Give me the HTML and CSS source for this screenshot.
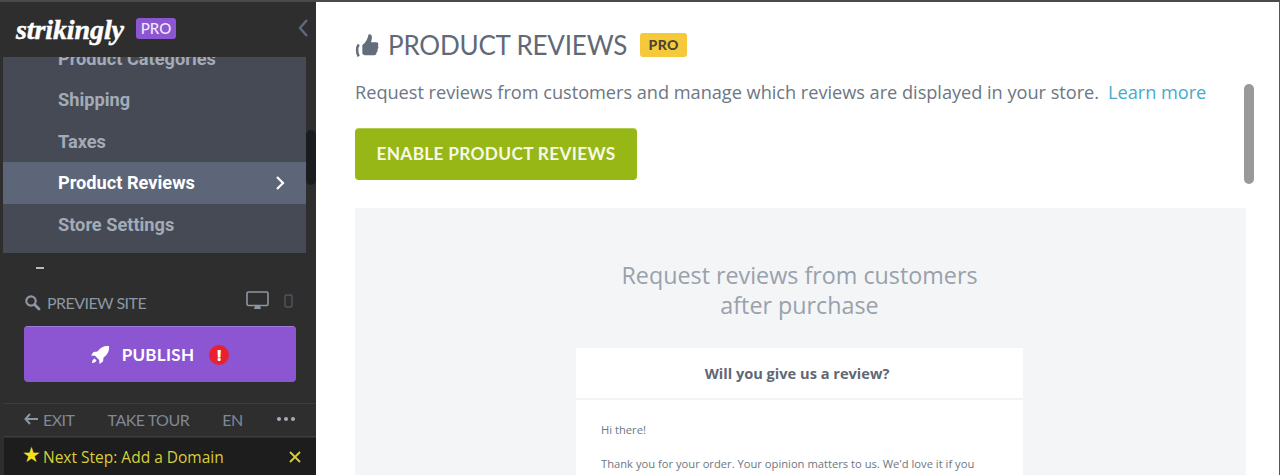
FILE: index.html
```html
<!DOCTYPE html>
<html lang="en">
<head>
<meta charset="utf-8">
<title>Product Reviews</title>
<link rel="stylesheet" href="styles.css">
</head>
<body>
<div class="app">
  <aside class="sidebar">
    <header class="brand">
      <span class="logo">strikingly</span>
      <span class="pro-purple">PRO</span>
      <svg class="collapse" width="12" height="20" viewBox="0 0 12 20"><path d="M10 2 3 10l7 8" fill="none" stroke="#5d6a7c" stroke-width="2.4"/></svg>
    </header>
    <div class="scroll-area">
      <nav class="menu">
        <a class="item">Product Categories</a>
        <a class="item">Shipping</a>
        <a class="item">Taxes</a>
        <a class="item active">Product Reviews
          <svg width="12" height="16" viewBox="0 0 12 16"><path d="M3 2l6 6-6 6" fill="none" stroke="#fff" stroke-width="2.2"/></svg>
        </a>
        <a class="item">Store Settings</a>
      </nav>
      <div class="next-section"></div>
      <div class="side-thumb"></div>
    </div>
    <div class="preview">
      <span class="preview-link">
        <svg width="17" height="17" viewBox="0 0 17 17"><circle cx="7" cy="7" r="4.7" fill="none" stroke="#8d96a3" stroke-width="2.2"/><path d="M10.5 10.5 15 15" stroke="#8d96a3" stroke-width="2.8" stroke-linecap="round"/></svg>
        PREVIEW SITE
      </span>
      <span class="devices">
        <svg width="23" height="20" viewBox="0 0 23 20"><rect x="1" y="1" width="21" height="13.5" rx="1.5" fill="none" stroke="#8d96a3" stroke-width="1.6"/><path d="M9 15h5l1 3H8z" fill="#8d96a3"/></svg>
        <svg width="9" height="14" viewBox="0 0 9 14"><rect x="1" y="1" width="7" height="12" rx="1.4" fill="none" stroke="#4f5663" stroke-width="1.4"/></svg>
      </span>
    </div>
    <button class="publish">
      <svg width="20" height="20" viewBox="0 0 20 20"><path d="M19 1c-5-.5-9 1.500-11.500 5.500L3.500 7 1 10.500l4 .3 4.200 4.200.3 4 3.500-2.500.5-4C17.500 10 19.500 6 19 1z" fill="#fff"/><path d="M4.500 13.500C3 14 2 16 2 18c2 0 4-1 4.500-2.500z" fill="#fff"/></svg>
      PUBLISH
      <span class="alert">!</span>
    </button>
    <div class="tools">
      <span class="exit">
        <svg width="14" height="12" viewBox="0 0 14 12"><path d="M6 1 1.500 6 6 11M2 6h12" fill="none" stroke="#8d96a3" stroke-width="2"/></svg>
        EXIT
      </span>
      <span>TAKE TOUR</span>
      <span>EN</span>
      <span class="dots"><i></i><i></i><i></i></span>
    </div>
    <div class="next-step">
      <span class="star">★</span>
      <span class="next-text">Next Step: Add a Domain</span>
      <svg class="close" width="12" height="12" viewBox="0 0 12 12"><path d="M1 1l10 10M11 1 1 11" stroke="#d8cf3a" stroke-width="1.800"/></svg>
    </div>
  </aside>
  <main class="main">
    <div class="title-row">
      <svg class="thumb" width="24" height="26" viewBox="0 0 23 25"><path d="M7 11.500c3-2 5-5 6-10 2-.8 3.500 1 3.200 3.500l-.8 4h5c2 0 2.500 2 1.600 3.200.8 1.200.6 2.600-.4 3.400.4 1.300 0 2.500-1 3.200.2 1.500-.8 2.700-2.300 2.700H11c-1.700 0-3-.6-4-1.500z" fill="#646d7b"/><path d="M3.500 11C1.500 14 1.500 19 3.500 22.500" fill="none" stroke="#646d7b" stroke-width="2.400"/></svg>
      <h1>PRODUCT REVIEWS</h1>
      <span class="pro-yellow">PRO</span>
    </div>
    <p class="lead">Request reviews from customers and manage which reviews are displayed in your store.<a class="learn">Learn more</a></p>
    <button class="enable">ENABLE PRODUCT REVIEWS</button>
    <section class="promo">
      <h2>Request reviews from customers<br>after purchase</h2>
      <div class="email">
        <div class="email-head">Will you give us a review?</div>
        <div class="email-body">
          <p>Hi there!</p>
          <p>Thank you for your order. Your opinion matters to us. We'd love it if you could leave a review of your purchase.</p>
        </div>
      </div>
    </section>
    <div class="main-thumb"></div>
  </main>
</div>
</body>
</html>
```
FILE: styles.css
```css
* { box-sizing: border-box; }
html, body { margin: 0; height: 100%; overflow: hidden; }
body { background: #fff; font-family: "Open Sans", sans-serif; }
.app {
  display: flex;
  width: 1280px;
  height: 475px;
  border-top: 2px solid #4a4a4a;
  border-right: 1px solid #555;
  overflow: hidden;
}
.sidebar {
  width: 316px;
  flex: none;
  display: flex;
  flex-direction: column;
  background: #2e2e2e;
  padding-left: 3px;
  position: relative;
}
.brand {
  height: 55px;
  flex: none;
  display: flex;
  align-items: center;
  padding-left: 13px;
  position: relative;
}
.logo {
  font-family: "Liberation Serif", serif;
  font-style: italic;
  font-weight: 700;
  font-size: 28px;
  color: #fff;
  width: 120px;
  letter-spacing: -.1px;
  -webkit-text-stroke: .5px #fff;
}
.pro-purple {
  background: #8c55d2;
  color: #f0e8fa;
  font: 500 15px/21px Lato, sans-serif;
  padding: 0;
  border-radius: 3px;
  width: 40px;
  text-align: center;
  margin-top: -2px;
}
.collapse { position: absolute; right: 7px; top: 16px; }
.scroll-area {
  height: 213px;
  flex: none;
  overflow: hidden;
  position: relative;
}
.menu {
  background: #454a55;
  width: 303px;
  height: 196px;
  overflow: hidden;
}
.item {
  display: flex;
  align-items: center;
  justify-content: space-between;
  height: 41.5px;
  padding: 0 20px 0 55px;
  font: 700 18.200px Roboto, sans-serif;
  color: #a3abb8;
}
.item:first-child { margin-top: -19.500px; }
.item.active { background: #5c6678; color: #fff; }
.next-section {
  width: 8px;
  height: 2px;
  margin: 14px 0 0 33px;
  background: #b6bbc2;
}
.side-thumb {
  position: absolute;
  left: 303px;
  top: 73px;
  width: 10px;
  height: 55px;
  border-radius: 5px;
  background: #1b1c20;
}
.preview {
  height: 56px;
  flex: none;
  display: flex;
  align-items: center;
  justify-content: space-between;
  padding: 8px 23px 0 21px;
  color: #8d96a3;
  font: 400 16px Lato, sans-serif;
  letter-spacing: -.55px;
}
.preview-link { display: flex; align-items: center; gap: 6px; }
.devices { display: flex; align-items: center; gap: 15px; margin-bottom: 2px; }
.publish {
  flex: none;
  width: 272px;
  height: 56px;
  margin-left: 21px;
  border: 0;
  border-top: 1px solid #a079dc;
  border-radius: 4px;
  background: #8c55d2;
  color: #fff;
  font: 700 17px Lato, sans-serif;
  letter-spacing: .3px;
  display: flex;
  align-items: center;
  justify-content: center;
  gap: 12px;
  padding: 0 1px 0 0;
}
.alert {
  width: 20px;
  height: 20px;
  margin-left: 3px;
  border-radius: 50%;
  background: #e8202f;
  color: #fff;
  font: 800 15px/20px "Open Sans", sans-serif;
  text-align: center;
}
.tools {
  flex: none;
  height: 34px;
  margin-top: 21px;
  border-top: 1px solid #3d3d3d;
  border-bottom: 1px solid #3d3d3d;
  display: flex;
  align-items: center;
  gap: 33px;
  padding: 0 21px 2px;
  color: #7f8895;
  font: 400 16px Lato, sans-serif;
  letter-spacing: -.5px;
  white-space: nowrap;
}
.exit { display: flex; align-items: center; gap: 5px; }
.dots { display: flex; gap: 2.500px; margin-left: 1px; }
.dots i { width: 4.500px; height: 4.500px; border-radius: 50%; background: #a5adb8; }
.next-step {
  flex: 1;
  display: flex;
  align-items: center;
  margin-left: 1px;
  margin-top: 1px;
  padding: 0 15px 0 18px;
  background: #1d1d1d;
  color: #d8cf3a;
  font: 400 15.500px "Open Sans", sans-serif;
}
.star { color: #f4e221; font-size: 21px; line-height: 1; margin-right: 2px; margin-top: -4px; }
.next-text { flex: 1; white-space: nowrap; }
.main {
  flex: 1;
  position: relative;
  padding: 14px 0 0 39px;
  overflow: hidden;
}
.title-row { display: flex; align-items: center; height: 58px; }
.thumb { margin-right: 9px; margin-top: 2px; }
h1 {
  margin: 0;
  font: 400 26px Lato, sans-serif;
  color: #5f6977;
  letter-spacing: -.2px;
}
.pro-yellow {
  margin-left: 13px;
  background: #f5c93a;
  color: #4a4436;
  font: 900 14px/24px Lato, sans-serif;
  width: 47px;
  text-align: center;
  border-radius: 3px;
  letter-spacing: .4px;
}
.lead {
  margin: 5px 0 0;
  font-size: 18.200px;
  line-height: 26px;
  color: #6d7683;
  white-space: nowrap;
  letter-spacing: -.03px;
}
.learn { color: #45abc9; margin-left: 9px; }
.enable {
  display: block;
  margin-top: 23px;
  width: 282px;
  height: 52px;
  border: 0;
  border-top: 1px solid #b0cc52;
  border-radius: 4px;
  background: #96b716;
  color: #f6f9e6;
  font: 700 17.300px Lato, sans-serif;
  letter-spacing: .3px;
  padding: 0 0 3px;
}
.promo {
  width: 891px;
  height: 300px;
  margin-top: 28px;
  background: #f4f5f7;
  padding-top: 52px;
  overflow: hidden;
}
h2 {
  margin: 0 2px 0 0;
  text-align: center;
  font: 400 23.300px/30px "Open Sans", sans-serif;
  color: #99a1ac;
}
.email {
  width: 447px;
  margin: 28px 0 0 221px;
  background: #fff;
}
.email-head {
  height: 52px;
  padding-right: 5px;
  border-bottom: 2px solid #f2f3f5;
  display: flex;
  align-items: center;
  justify-content: center;
  font: 700 14.600px "Open Sans", sans-serif;
  color: #5f6875;
}
.email-body {
  padding: 21px 24px 21px 25px;
  font-size: 11.200px;
  line-height: 17px;
  color: #6d7683;
}
.email-body p { margin: 0 0 17px; }
.main-thumb {
  position: absolute;
  left: 928px;
  top: 82px;
  width: 10px;
  height: 100px;
  border-radius: 5px;
  background: #999;
}
```
